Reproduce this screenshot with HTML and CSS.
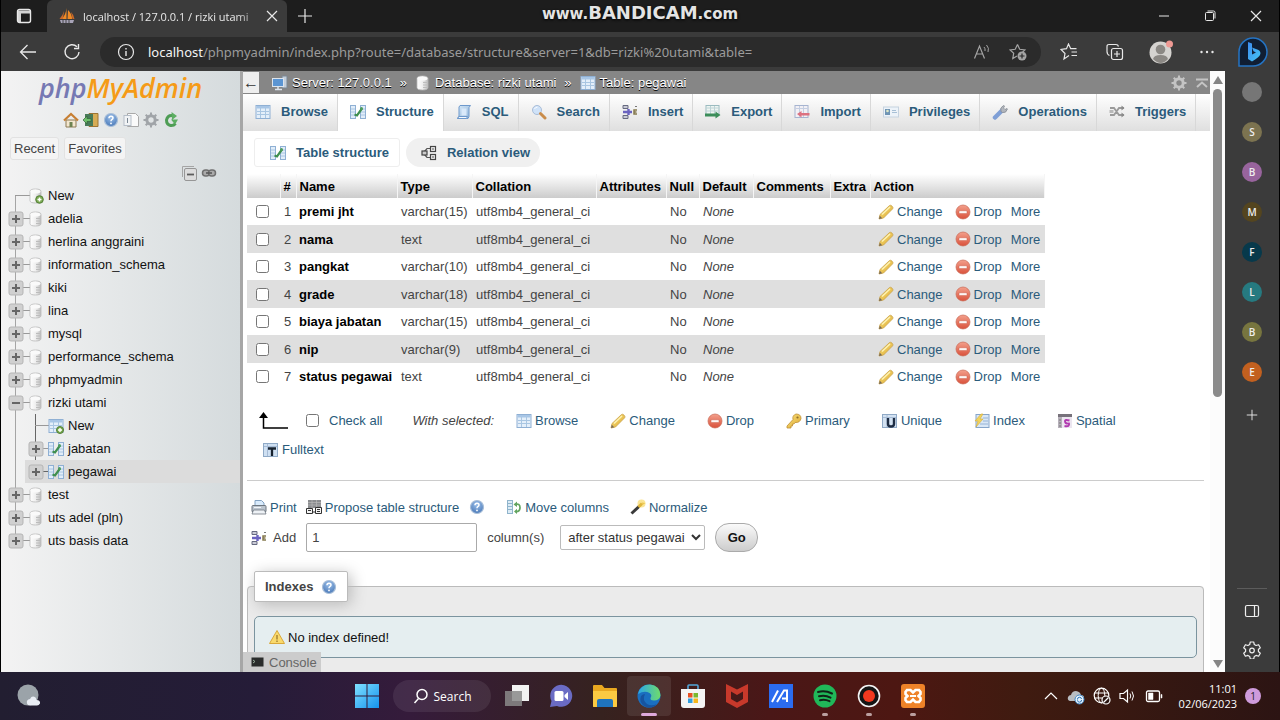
FILE: index.html
```html
<!DOCTYPE html>
<html lang="en">
<head>
    <meta charset="UTF-8">
    <meta name="viewport" content="width=device-width, initial-scale=1.0">
    <title>localhost / 127.0.0.1 / rizki utami / pegawai | phpMyAdmin</title>
    <link rel="stylesheet" href="styles.css">
</head>
<body>
    <svg class="sprite" aria-hidden="true">
        <defs>
            <linearGradient id="g-blue" x1="0" y1="0" x2="1" y2="1"><stop offset="0" stop-color="#d6e8f8"/><stop offset="1" stop-color="#8fb4d8"/></linearGradient>
            <linearGradient id="g-yellow" x1="0" y1="0" x2="1" y2="1"><stop offset="0" stop-color="#f9e27d"/><stop offset="1" stop-color="#dda832"/></linearGradient>
            <linearGradient id="g-red" x1="0" y1="0" x2="0" y2="1"><stop offset="0" stop-color="#f3a08c"/><stop offset="1" stop-color="#d9513b"/></linearGradient>
            <linearGradient id="g-db" x1="0" y1="0" x2="1" y2="0"><stop offset="0" stop-color="#ffffff"/><stop offset=".5" stop-color="#efefef"/><stop offset="1" stop-color="#bdbdbd"/></linearGradient>
            <radialGradient id="g-help" cx=".5" cy=".3" r=".7"><stop offset="0" stop-color="#9cc0ea"/><stop offset="1" stop-color="#4a79b8"/></radialGradient>
            <linearGradient id="g-win" x1="0" y1="0" x2="1" y2="1"><stop offset="0" stop-color="#7fe0ff"/><stop offset="1" stop-color="#1593ee"/></linearGradient>
            <linearGradient id="g-edge" x1="0" y1="0" x2="1" y2="0"><stop offset="0" stop-color="#2aa6e8"/><stop offset="1" stop-color="#6fdc6a"/></linearGradient>
            <linearGradient id="g-bing" x1="0" y1="0" x2="1" y2="1"><stop offset="0" stop-color="#3d8bf0"/><stop offset="1" stop-color="#45c6f2"/></linearGradient>
        </defs>

        <symbol id="i-browse" viewBox="0 0 16 16"><rect x="1" y="1.500" width="14" height="13" fill="#e4effa" stroke="#8fb0d4"/><path d="M1.500 2h13v2.500h-13z" fill="#a8c6e6"/><path d="M5.500 4v10M10.500 4v10M2 7.500h12M2 10.500h12" stroke="#a9c6e2"/></symbol>
        <symbol id="i-structure" viewBox="0 0 16 16"><rect x=".5" y="1.500" width="5" height="13" fill="#e1edf9" stroke="#8fb0d4"/><rect x="10.500" y="1.500" width="5" height="13" fill="#e1edf9" stroke="#8fb0d4"/><path d="M1 5h4M1 8h4M1 11h4M11 5h4M11 8h4M11 11h4" stroke="#a9c6e2"/><path d="M4.500 10.500l2.500 1 5-7" fill="none" stroke="#3f8f50" stroke-width="2.200"/><circle cx="11.500" cy="4.500" r="1.500" fill="#4e9c5c"/></symbol>
        <symbol id="i-sql" viewBox="0 0 16 16"><path d="M4 1.500h10.500l-1.500 2v9l-1 2H1.500l1.500-2.500v-9z" fill="url(#g-blue)" stroke="#6e99cc"/><path d="M5.500 4.500h5v7h-5z" fill="#d9e9fa"/><path d="M1.500 14.500h9l1-2H3z" fill="#f3f8fe" stroke="#6e99cc"/></symbol>
        <symbol id="i-search" viewBox="0 0 16 16"><circle cx="6" cy="6" r="4.500" fill="#cfe2f8" stroke="#a9bdd8"/><path d="M9.500 9.500l4.500 4.500" stroke="#c98c4a" stroke-width="3" stroke-linecap="round"/><path d="M3.500 5q1-2 3-2" fill="none" stroke="#fff"/></symbol>
        <symbol id="i-insert" viewBox="0 0 16 16"><path d="M1 1.500h5v3H1zM1 11.500h5v3H1z" fill="#c9cad6" stroke="#666a80"/><path d="M1 8h9M6.500 5v6" stroke="#6a63c0" stroke-width="2.400"/><path d="M15 6h-3v4h3M12 8h2.500" fill="none" stroke="#85794e" stroke-width="1.500"/><path d="M13 2.500h2" stroke="#777"/></symbol>
        <symbol id="i-export" viewBox="0 0 16 16"><rect x="1" y="1.500" width="13" height="9" fill="#eef5f2" stroke="#9bbbc0"/><path d="M1.500 4h12M1.500 7h12M5.500 2v8M9.500 2v8" stroke="#bdd3d6"/><path d="M0 9.500h10.500V7.500l5 3.500-5 3.500v-2H0z" fill="#3b8d5a"/></symbol>
        <symbol id="i-import" viewBox="0 0 16 16"><rect x="1" y="1.500" width="13" height="12" fill="#f2f0f5" stroke="#a6b4d0"/><path d="M1.500 4.500h12M5.500 2v11M9.500 2v11" stroke="#c5cfe2"/><path d="M15.500 9h-8V7L3 10l4.500 3.500v-2h8z" fill="#dc7180"/></symbol>
        <symbol id="i-priv" viewBox="0 0 16 16"><rect x=".5" y="3" width="15" height="10" fill="#edf3f9" stroke="#c6d3e0"/><rect x="2" y="5" width="5" height="6" fill="#6f94b4"/><circle cx="4.500" cy="7" r="1.300" fill="#dfe9c8"/><path d="M9 6.500h4M9 8.500h5" stroke="#a8c0d6"/></symbol>
        <symbol id="i-ops" viewBox="0 0 16 16"><path d="M3 13.500L9.500 7" stroke="#7f9fd6" stroke-width="4.500" stroke-linecap="round"/><path d="M9 7.500q-1.500-4 2.500-6l1 .5-1 2 1.500 1.500 2-1 .5.500q-1.500 4.500-5 3.500z" fill="#b2b6bd" stroke="#858b94" stroke-width=".8"/></symbol>
        <symbol id="i-triggers" viewBox="0 0 16 16"><path d="M1 4h4l5 7h5M1 11h4l5-7h5" fill="none" stroke="#9a9a9a" stroke-width="1.800"/><path d="M12.500 1.500L15.500 4l-3 2.500zM12.500 8.500l3 2.500-3 2.500z" fill="#8a8a8a"/><rect x=".5" y="6" width="4" height="3" fill="#b8b8b8"/></symbol>
        <symbol id="i-relation" viewBox="0 0 16 16"><path d="M9.500 3.500H6L3.500 6.500M3.500 9.500L6 12.500h3.500" fill="none" stroke="#555" stroke-width="1.200"/><rect x="1" y="6" width="5" height="4" fill="#ccc" stroke="#444" stroke-width="1.200"/><rect x="9.500" y="1.500" width="5" height="5" fill="#eee" stroke="#444" stroke-width="1.200"/><rect x="9.500" y="9.500" width="5" height="5" fill="#eee" stroke="#444" stroke-width="1.200"/><path d="M11 4h2M11 12h2" stroke="#555"/></symbol>
        <symbol id="i-pencil" viewBox="0 0 16 16"><path d="M1 15l1-4.500L11.500 1.500q1-.8 2.500.6t.7 2.700L5.500 14z" fill="url(#g-yellow)" stroke="#c9a24a" stroke-width=".8"/><path d="M1 15l.8-3.200 2.400 2.400z" fill="#75685a"/><path d="M4 10.500l8-7.500" stroke="#fdf3b5" stroke-width="1.400"/></symbol>
        <symbol id="i-drop" viewBox="0 0 16 16"><circle cx="8" cy="8" r="7" fill="url(#g-red)" stroke="#c96a56" stroke-width=".7"/><rect x="4" y="6.800" width="8" height="2.600" rx=".4" fill="#fff" stroke="#c95843" stroke-width=".5"/></symbol>
        <symbol id="i-key" viewBox="0 0 16 16"><path d="M1 13l6-6.500q-1-4 3-5.500 5 0 5 4.500-1 4.500-6 4l-1 1.500H6.500v2H5v2H1z" fill="url(#g-yellow)" stroke="#bf8f35" stroke-width=".8"/><circle cx="11.500" cy="4.500" r="1.100" fill="#8e6e2c"/></symbol>
        <symbol id="i-unique" viewBox="0 0 16 16"><rect x=".5" y="1.500" width="14" height="13" fill="#d3e2f2" stroke="#8fa9c6"/><path d="M1 4.500h13M5 2v12" stroke="#a7bcd6"/><path d="M6 5v6q0 2.500 3 2.500t3-2.500V5" fill="none" stroke="#1d2c43" stroke-width="2.400"/></symbol>
        <symbol id="i-index" viewBox="0 0 16 16"><rect x="2" y="1.500" width="13" height="13" fill="#d9e7f6" stroke="#86a5ca"/><path d="M9 5h5M9 8h5M6 11h8" stroke="#96b3d5"/><path d="M7 1L1 8h3l-2 6 7-8H6l3-5z" fill="#f2d45c" stroke="#d4ab3a" stroke-width=".6"/></symbol>
        <symbol id="i-spatial" viewBox="0 0 16 16"><rect x="1" y="2" width="14" height="13" fill="#ece6f0"/><path d="M1 1h14v3H1z" fill="#77727b"/><path d="M1 4h4v11H1z" fill="#b6b0ba"/><path d="M2 7h2M2 10h2M2 13h2" stroke="#777"/><path d="M12.500 7.500Q7.500 6 8 8.500t4 2q1 3.500-4.500 2.500" fill="none" stroke="#b13ab0" stroke-width="1.900"/></symbol>
        <symbol id="i-fulltext" viewBox="0 0 16 16"><rect x=".5" y="1.500" width="14" height="13" fill="#cfe0f2" stroke="#8fa9c6"/><path d="M1 4.500h13M4.500 2v12" stroke="#a7bcd6"/><path d="M5 6.500h8M9 6v8" stroke="#17222f" stroke-width="2.300"/></symbol>
        <symbol id="i-print" viewBox="0 0 16 16"><path d="M4 7V1.500h6.500L13 4v3z" fill="#d9ebfc" stroke="#83a2c2"/><path d="M1 7.500q0-1 1-1h12q1 0 1 1v5H1z" fill="#bcc5cf" stroke="#6e7780"/><path d="M2.500 11h11l1.500 4H1z" fill="#eef2f6" stroke="#6e7780" stroke-width=".8"/><path d="M3 8.500h7" stroke="#f2f5f8"/></symbol>
        <symbol id="i-propose" viewBox="0 0 16 16"><path d="M2 1h13v8H2z" fill="#8b8d90"/><path d="M2 3.500h13M2 6h13M6 1v8M10.500 1v8" stroke="#b9b9b9" stroke-width=".7"/><path d="M.5 9.500h6v5h-6zM9.500 8.500h6v6h-6z" fill="#f5f5f5" stroke="#333"/><path d="M2 11.500h3M11 10.500h3M11 12.500h3M6.500 13h3" stroke="#333"/></symbol>
        <symbol id="i-help" viewBox="0 0 16 16"><circle cx="8" cy="8" r="6.500" fill="url(#g-help)" stroke="#a9bfd9" stroke-width="1.200"/><path d="M6 6.300q0-2 2-2t2 1.700q0 1-1.200 1.700-.8.500-.8 1.500" fill="none" stroke="#fff" stroke-width="1.500"/><circle cx="8" cy="11.400" r=".9" fill="#fff"/></symbol>
        <symbol id="i-move" viewBox="0 0 16 16"><rect x="1.500" y="1.500" width="5" height="13" fill="#dcebf5" stroke="#8fb4cc"/><path d="M2 4.500h4M2 7.500h4M2 10.500h4" stroke="#8fb4cc"/><path d="M9 5.500q5-1.500 5 3T9.500 12.500" fill="none" stroke="#62a45f" stroke-width="1.700"/><path d="M11 2.500v5.500L7.500 5.500zM11 15V9.800L8 12.500z" fill="#62a45f"/></symbol>
        <symbol id="i-wand" viewBox="0 0 16 16"><circle cx="11.500" cy="4.500" r="4" fill="#fbe697"/><path d="M1.500 14.500L9 7.500" stroke="#3a3a3a" stroke-width="3"/><path d="M8.500 8l3.500-3.500" stroke="#e0b63c" stroke-width="3"/><path d="M11 0l1 3.500 3.500.5-3 2" fill="#edc750"/></symbol>
        <symbol id="i-warn" viewBox="0 0 16 16"><path d="M8 1.500L15.500 14.500H.5z" fill="#f9d96c" stroke="#d9a83a" stroke-linejoin="round"/><path d="M8 6v4.500M8 11.500v1.500" stroke="#a88534" stroke-width="1.500"/></symbol>
        <symbol id="i-console" viewBox="0 0 16 16"><rect x="1" y="3" width="13" height="10" fill="#2a2c2b" stroke="#c9c9c9"/><path d="M3 6l2 1.500L3 9" fill="none" stroke="#9bb09d"/></symbol>
        <symbol id="i-db" viewBox="0 0 16 16"><path d="M2 3.500Q2 1 7.500 1T13 3.500v9Q13 15 7.500 15T2 12.500z" fill="url(#g-db)" stroke="#b9b9b9" stroke-width=".8"/><ellipse cx="7.500" cy="3.500" rx="5" ry="2" fill="#fafafa"/><path d="M8 7.500h4M8 10h4M8 12.500h4" stroke="#bcbcbc"/></symbol>
        <symbol id="i-dbnew" viewBox="0 0 16 16"><path d="M2 3.500Q2 1 7.500 1T13 3.500v9Q13 15 7.500 15T2 12.500z" fill="url(#g-db)" stroke="#b9b9b9" stroke-width=".8"/><ellipse cx="7.500" cy="3.500" rx="5" ry="2" fill="#fafafa"/><circle cx="11.500" cy="11.500" r="3.800" fill="#78a94f" stroke="#547f38"/><path d="M11.500 9.500v4M9.500 11.500h4" stroke="#fff" stroke-width="1.500"/></symbol>
        <symbol id="i-tablenew" viewBox="0 0 16 16"><use href="#i-browse"/><circle cx="12" cy="12" r="3.500" fill="#78a94f" stroke="#547f38"/><path d="M12 10v4M10 12h4" stroke="#fff" stroke-width="1.400"/></symbol>
        <symbol id="i-plus" viewBox="0 0 16 16"><rect x="1" y="1" width="14" height="14" rx="2" fill="#d0d0d0" stroke="#b5b5b5"/><path d="M8 4v8M4 8h8" stroke="#666" stroke-width="2"/></symbol>
        <symbol id="i-minus" viewBox="0 0 16 16"><rect x="1" y="1" width="14" height="14" rx="2" fill="#d0d0d0" stroke="#b5b5b5"/><path d="M4 8h8" stroke="#666" stroke-width="2"/></symbol>
        <symbol id="i-collapse" viewBox="0 0 16 16"><path d="M1.500 12V1.500H13" fill="none" stroke="#a5a5a5"/><rect x="3.500" y="3.500" width="12" height="12" rx="1.500" fill="#dcdcdc" stroke="#969696"/><path d="M6 9.500h7" stroke="#5c5c5c" stroke-width="1.800"/></symbol>
        <symbol id="i-chain" viewBox="0 0 16 16"><rect x="1.500" y="5" width="7" height="6" rx="3" fill="#aaa" stroke="#707070" stroke-width="1.500"/><rect x="7.500" y="5" width="7" height="6" rx="3" fill="#aaa" stroke="#707070" stroke-width="1.500"/><path d="M5 8h6" stroke="#555" stroke-width="1.500"/></symbol>
        <symbol id="i-home" viewBox="0 0 16 16"><path d="M3 8h10v7H3z" fill="#f3e6cf" stroke="#8d7a55"/><path d="M1 8.500L8 2l7 6.500" fill="none" stroke="#c77f33" stroke-width="2.200"/><path d="M6.500 10h3v5h-3z" fill="#6d8251"/></symbol>
        <symbol id="i-exit" viewBox="0 0 16 16"><path d="M6 1.500h9v13H6z" fill="#d7ac55" stroke="#9c7535"/><path d="M2 2h8v12H2z" fill="#487a59"/><path d="M0 8l4-4v2.500h4v3H4V12z" fill="#6fc06c" stroke="#33633a" stroke-width=".7"/></symbol>
        <symbol id="i-docs" viewBox="0 0 16 16"><path d="M4.500 1.500h8l3 3v10h-11z" fill="#fafafa" stroke="#a9a9a9"/><rect x="1" y="3.500" width="7" height="10" fill="#f1f3f5" stroke="#b5bec8"/><path d="M4.500 6v5" stroke="#7a8894"/></symbol>
        <symbol id="i-gear" viewBox="0 0 16 16"><circle cx="8" cy="8" r="4.200" fill="none" stroke="currentColor" stroke-width="3"/><path d="M8 .5v3M8 12.500v3M.5 8h3M12.500 8h3M2.700 2.700l2.100 2.100M11.200 11.200l2.100 2.100M13.300 2.700l-2.100 2.100M4.800 11.200l-2.100 2.100" stroke="currentColor" stroke-width="2"/></symbol>
        <symbol id="i-reload" viewBox="0 0 16 16"><path d="M12.500 11.500q-2 2.500-5 2-4-1-4-5.500 1-5 6-4.500" fill="none" stroke="#4e9d55" stroke-width="3"/><path d="M8.500 0L14 4 9 8zM8 7.500h7l-3 5z" fill="#5cae62"/></symbol>
        <symbol id="i-server" viewBox="0 0 16 16"><path d="M10 1h5v12h-5z" fill="#c4cfdb" stroke="#7b8794"/><rect x=".5" y="3.500" width="11" height="8" fill="#5b95d3" stroke="#dce4ed"/><path d="M3 14.500h7M6 12v2" stroke="#dce4ed" stroke-width="1.500"/></symbol>
        <symbol id="i-pma" viewBox="0 0 16 16"><path d="M7.500 0Q7 6 3 11h4.500zM9 2q4 4 4 9H8.500z" fill="#f08a24"/><path d="M5 3Q4 7 .5 11H4zM12 4q3 3 3.500 7h-2z" fill="#c9692a"/><path d="M1 12h14l-1 3H2z" fill="#a8a4b8"/><path d="M4 12v3M7 12v3M10 12v3" stroke="#444"/></symbol>

        <symbol id="b-tabs" viewBox="0 0 16 16"><rect x="1.500" y="1.500" width="13" height="13" rx="2" fill="none" stroke="currentColor" stroke-width="1.400"/><path d="M1.500 2.500h13v3h-13zM2 5h3v9H2z" fill="currentColor" opacity=".9"/></symbol>
        <symbol id="b-close" viewBox="0 0 16 16"><path d="M3 3l10 10M13 3L3 13" stroke="currentColor" stroke-width="1.200"/></symbol>
        <symbol id="b-plus" viewBox="0 0 16 16"><path d="M8 1v14M1 8h14" stroke="currentColor" stroke-width="1.200"/></symbol>
        <symbol id="b-min" viewBox="0 0 16 16"><path d="M3 8h10" stroke="currentColor"/></symbol>
        <symbol id="b-max" viewBox="0 0 16 16"><rect x="3.500" y="4.500" width="8" height="8" rx="1" fill="none" stroke="currentColor"/><path d="M5.500 3h6q1.500 0 1.500 1.500v6" fill="none" stroke="currentColor"/></symbol>
        <symbol id="b-back" viewBox="0 0 18 18"><path d="M17 9H1.500M8.500 2L1.500 9l7 7" fill="none" stroke="currentColor" stroke-width="1.300"/></symbol>
        <symbol id="b-refresh" viewBox="0 0 18 18"><path d="M16 9a7 7 0 1 1-2-5.200M15.500 1v4.500H11" fill="none" stroke="currentColor" stroke-width="1.400"/></symbol>
        <symbol id="b-info" viewBox="0 0 18 18"><circle cx="9" cy="9" r="7.500" fill="none" stroke="currentColor" stroke-width="1.200"/><path d="M9 8v5M9 5v1.500" stroke="currentColor" stroke-width="1.400"/></symbol>
        <symbol id="b-read" viewBox="0 0 18 18"><path d="M1.500 15.500L6.500 3l5 12.500M3.500 11h6" fill="none" stroke="currentColor" stroke-width="1.200"/><path d="M11 4q1.500 1.500 1 4M13.500 2q3 3 1.500 7" fill="none" stroke="currentColor"/></symbol>
        <symbol id="b-staradd" viewBox="0 0 18 18"><path d="M8.500 1.500l2.200 4.800 5.200.6-3 3M8 13l-4.200 2.500.9-5.300L1 6.900l5.200-.6 2.300-4.800" fill="none" stroke="currentColor" stroke-width="1.200"/><circle cx="13" cy="13" r="4.500" fill="currentColor"/><path d="M13 10.500v5M10.500 13h5" stroke="#2b2b2b" stroke-width="1.200"/></symbol>
        <symbol id="b-fav" viewBox="0 0 18 18"><path d="M9 12.500L4 16l1-5.500L1 6.500l5.500-.8L8.500 1l2.200 4.700h5.800M11.500 9h5.500M11.500 12.500h5.500" fill="none" stroke="currentColor" stroke-width="1.200"/></symbol>
        <symbol id="b-collect" viewBox="0 0 18 18"><rect x="5.500" y="5.500" width="11" height="11" rx="2" fill="none" stroke="currentColor" stroke-width="1.200"/><path d="M11 8v6M8 11h6M3.500 12.500q-2.500-1-2.500-4V3.500Q1 1.500 3 1.500h7q2 0 2.500 2" fill="none" stroke="currentColor" stroke-width="1.200"/></symbol>
        <symbol id="b-dots" viewBox="0 0 18 18"><circle cx="3.500" cy="9" r="1.200" fill="currentColor"/><circle cx="9" cy="9" r="1.200" fill="currentColor"/><circle cx="14.500" cy="9" r="1.200" fill="currentColor"/></symbol>
        <symbol id="b-avatar" viewBox="0 0 24 24"><circle cx="11.500" cy="12.500" r="11" fill="#d5d3d0"/><circle cx="11.500" cy="9.500" r="4.800" fill="#8b8884"/><path d="M4 19q1-4 7.500-4t7.500 4q-7 8-15 0z" fill="#8b8884"/><circle cx="20.500" cy="4" r="3.500" fill="#ef9a94"/></symbol>
        <symbol id="b-bing" viewBox="0 0 32 32"><path d="M2 30V16A14 14 0 1 1 16 30z" fill="#101e33" stroke="#2574c4" stroke-width="1.500"/><path d="M11 6l4 1.500v11l4-2-2.500-1.200L15 11.500l6 2.200q3.500 2 2 5.300-1 2-8 6.500l-4-2.500z" fill="url(#g-bing)"/></symbol>
        <symbol id="b-panel" viewBox="0 0 16 16"><rect x="1.500" y="2.500" width="13" height="11" rx="1.500" fill="none" stroke="currentColor" stroke-width="1.200"/><path d="M10.500 2.500v11" stroke="currentColor" stroke-width="1.200"/></symbol>
        <symbol id="b-cog" viewBox="0 0 18 18"><path d="M7.300 1h3.400l.6 2.500 1.800 1 2.500-.8 1.700 3-1.900 1.800v2l1.900 1.700-1.700 3-2.500-.8-1.800 1-.6 2.600H7.300l-.6-2.600-1.800-1-2.500.8-1.700-3 1.900-1.700v-2L.7 6.700l1.700-3 2.500.8 1.800-1z" fill="none" stroke="currentColor" stroke-width="1.200" stroke-linejoin="round"/><circle cx="9" cy="9.500" r="2.300" fill="none" stroke="currentColor" stroke-width="1.200"/></symbol>

        <symbol id="t-weather" viewBox="0 0 26 26"><circle cx="12" cy="12" r="10.500" fill="#9ba3a9"/><path d="M11 20.500q-1-4 3-4.500 2-4 5.500-1.500 1 1 1 2.500 4 0 3.500 3.500-1 2-3 2h-7q-2.500 0-3-2z" fill="#e9edf4"/></symbol>
        <symbol id="t-win" viewBox="0 0 26 26"><path d="M1 1h11.500v11.500H1zM13.500 1H25v11.500H13.500zM1 13.500h11.500V25H1zM13.500 13.500H25V25H13.500z" fill="url(#g-win)"/></symbol>
        <symbol id="t-search" viewBox="0 0 16 16"><circle cx="9" cy="6.500" r="5" fill="none" stroke="currentColor" stroke-width="1.500"/><path d="M5.500 10.500L1.500 15" stroke="currentColor" stroke-width="1.500"/></symbol>
        <symbol id="t-view" viewBox="0 0 26 26"><path d="M8 2h17v16H8z" fill="#f2f2f2"/><path d="M1 8h17v15H1z" fill="#8a8a8a" opacity=".85"/></symbol>
        <symbol id="t-chat" viewBox="0 0 26 26"><path d="M2 24l1.500-6A11 11 0 1 1 9 23z" fill="#6a6bc4"/><rect x="6.500" y="8" width="9" height="10" rx="1.500" fill="#fff"/><path d="M16.500 12l3.500-3v8l-3.500-3z" fill="#fff"/></symbol>
        <symbol id="t-folder" viewBox="0 0 26 26"><path d="M1 3q0-1 1-1h8l2.500 3H24q1 0 1 1v17q0 1-1 1H2q-1 0-1-1z" fill="#e9a820"/><path d="M1 8h24v15q0 1-1 1H2q-1 0-1-1z" fill="#fbca42"/><path d="M5 24v-6q0-2 2-2h12q2 0 2 2v6z" fill="#1f74bd"/></symbol>
        <symbol id="t-edge" viewBox="0 0 26 26"><circle cx="13" cy="13" r="11.500" fill="#1a6fc0"/><path d="M2 11Q4 1.500 14 1.500q10 1 10.500 11-1 5-6.500 5-4 0-3.500-2.500 2-3-1-5-5-3-11.500 1z" fill="url(#g-edge)"/><path d="M9 11q-3 6 2 10 4 2.500 10 0-4 5-11 3-8-4-5-11 2-2 4-2z" fill="#1754a0"/></symbol>
        <symbol id="t-store" viewBox="0 0 26 26"><path d="M8 7V3q0-1 1-1h8q1 0 1 1v4" fill="none" stroke="#53a6d9" stroke-width="1.600"/><path d="M1 6h24v16q0 3-3 3H4q-3 0-3-3z" fill="#f4f4f4"/><path d="M8 10h4.500v4.500H8z" fill="#e75124"/><path d="M13.500 10H18v4.500h-4.500z" fill="#7ab82f"/><path d="M8 15.500h4.500V20H8z" fill="#2e9ee0"/><path d="M13.500 15.500H18V20h-4.500z" fill="#f5b61c"/></symbol>
        <symbol id="t-mcafee" viewBox="0 0 26 26"><path d="M2 1l11 5.500L24 1v18l-11 6-11-6zM7 8.500v7.500l6 3.500 6-3.500V8.500L13 12z" fill="#c8392b" fill-rule="evenodd"/></symbol>
        <symbol id="t-asus" viewBox="0 0 26 26"><path d="M1 1h24v24H1z" fill="#2b6cf0"/><path d="M4 19L10 7.500M9 19l7-11.500h3V19M14 15.500h5" fill="none" stroke="#fff" stroke-width="2"/></symbol>
        <symbol id="t-spotify" viewBox="0 0 26 26"><circle cx="13" cy="13" r="11.500" fill="#20b859"/><path d="M6 9q7-2 14 1.500M7 13.300q6-1.700 11.500 1.300M8 17.200q5-1.200 9.500 1" fill="none" stroke="#102417" stroke-width="2" stroke-linecap="round"/></symbol>
        <symbol id="t-rec" viewBox="0 0 26 26"><circle cx="13" cy="13" r="10.500" fill="#151515" stroke="#f3f3f3" stroke-width="1.600"/><circle cx="13" cy="13" r="6" fill="#f2391f"/></symbol>
        <symbol id="t-xampp" viewBox="0 0 26 26"><rect x="1" y="1" width="24" height="24" rx="3" fill="#ee8228"/><path d="M7 7h3.500L13 9.500 15.500 7H19l1.500 2v2L18.500 13l2 2v2L19 19h-3.500L13 16.500 10.500 19H7l-1.500-2v-2l2-2-2-2V9z" fill="none" stroke="#fff" stroke-width="2.600"/><path d="M10 13h6" stroke="#fff" stroke-width="2"/></symbol>
        <symbol id="t-up" viewBox="0 0 16 16"><path d="M2 11l6-6 6 6" fill="none" stroke="currentColor" stroke-width="1.200"/></symbol>
        <symbol id="t-cloud" viewBox="0 0 18 18"><path d="M3 14q-3-1-2-4 1-2 3-2 1-4 5-4 4 .5 5 4 3 0 3 3t-3 3z" fill="#b9bcc0"/><circle cx="12.500" cy="12.500" r="4.500" fill="#e8f1fa" stroke="#3f86c4"/><path d="M10.500 12.500a2 2 0 0 1 4-.5M14.500 13a2 2 0 0 1-4 .3" fill="none" stroke="#2571b5"/></symbol>
        <symbol id="t-globe" viewBox="0 0 18 18"><circle cx="8.500" cy="8.500" r="7.300" fill="none" stroke="currentColor" stroke-width="1.200"/><ellipse cx="8.500" cy="8.500" rx="3.300" ry="7.300" fill="none" stroke="currentColor"/><path d="M1.500 6h14M1.500 11h14" stroke="currentColor"/><circle cx="13" cy="13" r="4" fill="#2b1612" stroke="currentColor" stroke-width="1.200"/><path d="M10.500 15.500l5-5" stroke="currentColor" stroke-width="1.200"/></symbol>
        <symbol id="t-sound" viewBox="0 0 18 18"><path d="M1 6.500h3.500L8.500 3v12l-4-3.500H1z" fill="none" stroke="currentColor" stroke-width="1.200"/><path d="M11 6.500q1.500 2.500 0 5M13 4.500q3 4.500 0 9" fill="none" stroke="currentColor"/></symbol>
        <symbol id="t-battery" viewBox="0 0 18 18"><rect x="1.500" y="4" width="13" height="10.500" rx="1.500" fill="none" stroke="currentColor" stroke-width="1.300"/><path d="M3.500 6H8v6.500H3.500zM16 7.500h1v3.500h-1z" fill="currentColor" stroke="currentColor" stroke-width=".5"/></symbol>
    </svg>

    <header class="titlebar">
        <button class="icon-btn tab-actions" aria-label="Tab actions"><svg class="icon"><use href="#b-tabs"/></svg></button>
        <div class="browser-tab">
            <svg class="icon"><use href="#i-pma"/></svg>
            <span class="browser-tab-title">localhost / 127.0.0.1 / rizki utami</span>
            <button class="icon-btn" aria-label="Close tab"><svg class="icon"><use href="#b-close"/></svg></button>
        </div>
        <button class="icon-btn new-tab" aria-label="New tab"><svg class="icon"><use href="#b-plus"/></svg></button>
        <div class="watermark">www.<b>BANDICAM</b>.com</div>
        <div class="window-controls">
            <button class="icon-btn" aria-label="Minimize"><svg class="icon"><use href="#b-min"/></svg></button>
            <button class="icon-btn" aria-label="Restore"><svg class="icon"><use href="#b-max"/></svg></button>
            <button class="icon-btn" aria-label="Close"><svg class="icon"><use href="#b-close"/></svg></button>
        </div>
    </header>

    <div class="toolbar">
        <button class="icon-btn" aria-label="Back"><svg class="icon-lg"><use href="#b-back"/></svg></button>
        <button class="icon-btn" aria-label="Refresh"><svg class="icon-lg"><use href="#b-refresh"/></svg></button>
        <div class="address">
            <svg class="icon-lg"><use href="#b-info"/></svg>
            <span class="url"><span class="url-host">localhost</span>/phpmyadmin/index.php?route=/database/structure&amp;server=1&amp;db=rizki%20utami&amp;table=</span>
            <svg class="icon-lg dim"><use href="#b-read"/></svg>
            <svg class="icon-lg dim"><use href="#b-staradd"/></svg>
        </div>
        <div class="toolbar-actions">
            <button class="icon-btn" aria-label="Favorites"><svg class="icon-lg"><use href="#b-fav"/></svg></button>
            <button class="icon-btn" aria-label="Collections"><svg class="icon-lg"><use href="#b-collect"/></svg></button>
            <button class="icon-btn" aria-label="Profile"><svg class="icon-avatar"><use href="#b-avatar"/></svg></button>
            <button class="icon-btn" aria-label="Settings and more"><svg class="icon-lg"><use href="#b-dots"/></svg></button>
            <button class="icon-btn" aria-label="Discover"><svg class="icon-bing"><use href="#b-bing"/></svg></button>
        </div>
    </div>

    <div class="workspace">
        <nav class="pma-nav">
            <a class="pma-logo" href="#"><span>php</span>MyAdmin</a>
            <div class="nav-icons">
                <a href="#" aria-label="Home"><svg class="icon"><use href="#i-home"/></svg></a>
                <a href="#" aria-label="Log out"><svg class="icon"><use href="#i-exit"/></svg></a>
                <a href="#" aria-label="phpMyAdmin documentation"><svg class="icon"><use href="#i-help"/></svg></a>
                <a href="#" aria-label="Documentation"><svg class="icon"><use href="#i-docs"/></svg></a>
                <a href="#" aria-label="Navigation panel settings"><svg class="icon gear"><use href="#i-gear"/></svg></a>
                <a href="#" aria-label="Reload navigation panel"><svg class="icon"><use href="#i-reload"/></svg></a>
            </div>
            <div class="nav-lists">
                <button>Recent</button>
                <button>Favorites</button>
            </div>
            <div class="nav-tools">
                <a href="#" aria-label="Collapse all"><svg class="icon"><use href="#i-collapse"/></svg></a>
                <a href="#" aria-label="Unlink from main panel"><svg class="icon"><use href="#i-chain"/></svg></a>
            </div>
            <ul class="tree">
                <li><div class="node leaf"><svg class="icon"><use href="#i-dbnew"/></svg><a href="#">New</a></div></li>
                <li><div class="node"><button aria-label="Expand"><svg class="icon"><use href="#i-plus"/></svg></button><svg class="icon"><use href="#i-db"/></svg><a href="#">adelia</a></div></li>
                <li><div class="node"><button aria-label="Expand"><svg class="icon"><use href="#i-plus"/></svg></button><svg class="icon"><use href="#i-db"/></svg><a href="#">herlina anggraini</a></div></li>
                <li><div class="node"><button aria-label="Expand"><svg class="icon"><use href="#i-plus"/></svg></button><svg class="icon"><use href="#i-db"/></svg><a href="#">information_schema</a></div></li>
                <li><div class="node"><button aria-label="Expand"><svg class="icon"><use href="#i-plus"/></svg></button><svg class="icon"><use href="#i-db"/></svg><a href="#">kiki</a></div></li>
                <li><div class="node"><button aria-label="Expand"><svg class="icon"><use href="#i-plus"/></svg></button><svg class="icon"><use href="#i-db"/></svg><a href="#">lina</a></div></li>
                <li><div class="node"><button aria-label="Expand"><svg class="icon"><use href="#i-plus"/></svg></button><svg class="icon"><use href="#i-db"/></svg><a href="#">mysql</a></div></li>
                <li><div class="node"><button aria-label="Expand"><svg class="icon"><use href="#i-plus"/></svg></button><svg class="icon"><use href="#i-db"/></svg><a href="#">performance_schema</a></div></li>
                <li><div class="node"><button aria-label="Expand"><svg class="icon"><use href="#i-plus"/></svg></button><svg class="icon"><use href="#i-db"/></svg><a href="#">phpmyadmin</a></div></li>
                <li>
                    <div class="node"><button aria-label="Collapse"><svg class="icon"><use href="#i-minus"/></svg></button><svg class="icon"><use href="#i-db"/></svg><a href="#">rizki utami</a></div>
                    <ul class="subtree">
                        <li><div class="node leaf"><svg class="icon"><use href="#i-tablenew"/></svg><a href="#">New</a></div></li>
                        <li><div class="node"><button aria-label="Expand"><svg class="icon"><use href="#i-plus"/></svg></button><svg class="icon"><use href="#i-structure"/></svg><a href="#">jabatan</a></div></li>
                        <li><div class="node selected"><button aria-label="Expand"><svg class="icon"><use href="#i-plus"/></svg></button><svg class="icon"><use href="#i-structure"/></svg><a href="#">pegawai</a></div></li>
                    </ul>
                </li>
                <li><div class="node"><button aria-label="Expand"><svg class="icon"><use href="#i-plus"/></svg></button><svg class="icon"><use href="#i-db"/></svg><a href="#">test</a></div></li>
                <li><div class="node"><button aria-label="Expand"><svg class="icon"><use href="#i-plus"/></svg></button><svg class="icon"><use href="#i-db"/></svg><a href="#">uts adel (pln)</a></div></li>
                <li><div class="node"><button aria-label="Expand"><svg class="icon"><use href="#i-plus"/></svg></button><svg class="icon"><use href="#i-db"/></svg><a href="#">uts basis data</a></div></li>
            </ul>
        </nav>

        <main class="pma-main">
            <div class="breadcrumb">
                <button class="collapse-nav" aria-label="Hide panel">←</button>
                <a href="#"><svg class="icon"><use href="#i-server"/></svg>Server: 127.0.0.1</a>
                <span>»</span>
                <a href="#"><svg class="icon"><use href="#i-db"/></svg>Database: rizki utami</a>
                <span>»</span>
                <a href="#"><svg class="icon"><use href="#i-browse"/></svg>Table: pegawai</a>
                <div class="breadcrumb-tools">
                    <svg class="icon"><use href="#i-gear"/></svg>
                    <svg class="icon" viewBox="0 0 16 16"><path d="M2 4.500h12M3 12l5-4.500 5 4.500" fill="none" stroke="currentColor" stroke-width="2"/></svg>
                </div>
            </div>

            <div class="tabs">
                <a href="#"><svg class="icon"><use href="#i-browse"/></svg>Browse</a>
                <a href="#" class="active"><svg class="icon"><use href="#i-structure"/></svg>Structure</a>
                <a href="#"><svg class="icon"><use href="#i-sql"/></svg>SQL</a>
                <a href="#"><svg class="icon"><use href="#i-search"/></svg>Search</a>
                <a href="#"><svg class="icon"><use href="#i-insert"/></svg>Insert</a>
                <a href="#"><svg class="icon"><use href="#i-export"/></svg>Export</a>
                <a href="#"><svg class="icon"><use href="#i-import"/></svg>Import</a>
                <a href="#"><svg class="icon"><use href="#i-priv"/></svg>Privileges</a>
                <a href="#"><svg class="icon"><use href="#i-ops"/></svg>Operations</a>
                <a href="#"><svg class="icon"><use href="#i-triggers"/></svg>Triggers</a>
            </div>

            <div class="content">
                <div class="subtabs">
                    <a href="#" class="active"><svg class="icon"><use href="#i-structure"/></svg>Table structure</a>
                    <a href="#"><svg class="icon"><use href="#i-relation"/></svg>Relation view</a>
                </div>

                <table class="columns">
                    <colgroup>
                        <col class="c-check"><col class="c-num"><col class="c-name"><col class="c-type"><col class="c-coll"><col class="c-attr"><col class="c-null"><col class="c-def"><col class="c-comm"><col class="c-extra"><col class="c-action">
                    </colgroup>
                    <thead>
                        <tr><th></th><th>#</th><th>Name</th><th>Type</th><th>Collation</th><th>Attributes</th><th>Null</th><th>Default</th><th>Comments</th><th>Extra</th><th>Action</th></tr>
                    </thead>
                    <tbody>
                        <tr>
                            <td><input type="checkbox" aria-label="Select premi jht"></td><td>1</td><th>premi jht</th><td>varchar(15)</td><td>utf8mb4_general_ci</td><td></td><td>No</td><td><i>None</i></td><td></td><td></td>
                            <td><div class="row-actions"><a href="#"><svg class="icon"><use href="#i-pencil"/></svg>Change</a><a href="#"><svg class="icon"><use href="#i-drop"/></svg>Drop</a><a href="#">More</a></div></td>
                        </tr>
                        <tr>
                            <td><input type="checkbox" aria-label="Select nama"></td><td>2</td><th>nama</th><td>text</td><td>utf8mb4_general_ci</td><td></td><td>No</td><td><i>None</i></td><td></td><td></td>
                            <td><div class="row-actions"><a href="#"><svg class="icon"><use href="#i-pencil"/></svg>Change</a><a href="#"><svg class="icon"><use href="#i-drop"/></svg>Drop</a><a href="#">More</a></div></td>
                        </tr>
                        <tr>
                            <td><input type="checkbox" aria-label="Select pangkat"></td><td>3</td><th>pangkat</th><td>varchar(10)</td><td>utf8mb4_general_ci</td><td></td><td>No</td><td><i>None</i></td><td></td><td></td>
                            <td><div class="row-actions"><a href="#"><svg class="icon"><use href="#i-pencil"/></svg>Change</a><a href="#"><svg class="icon"><use href="#i-drop"/></svg>Drop</a><a href="#">More</a></div></td>
                        </tr>
                        <tr>
                            <td><input type="checkbox" aria-label="Select grade"></td><td>4</td><th>grade</th><td>varchar(18)</td><td>utf8mb4_general_ci</td><td></td><td>No</td><td><i>None</i></td><td></td><td></td>
                            <td><div class="row-actions"><a href="#"><svg class="icon"><use href="#i-pencil"/></svg>Change</a><a href="#"><svg class="icon"><use href="#i-drop"/></svg>Drop</a><a href="#">More</a></div></td>
                        </tr>
                        <tr>
                            <td><input type="checkbox" aria-label="Select biaya jabatan"></td><td>5</td><th>biaya jabatan</th><td>varchar(15)</td><td>utf8mb4_general_ci</td><td></td><td>No</td><td><i>None</i></td><td></td><td></td>
                            <td><div class="row-actions"><a href="#"><svg class="icon"><use href="#i-pencil"/></svg>Change</a><a href="#"><svg class="icon"><use href="#i-drop"/></svg>Drop</a><a href="#">More</a></div></td>
                        </tr>
                        <tr>
                            <td><input type="checkbox" aria-label="Select nip"></td><td>6</td><th>nip</th><td>varchar(9)</td><td>utf8mb4_general_ci</td><td></td><td>No</td><td><i>None</i></td><td></td><td></td>
                            <td><div class="row-actions"><a href="#"><svg class="icon"><use href="#i-pencil"/></svg>Change</a><a href="#"><svg class="icon"><use href="#i-drop"/></svg>Drop</a><a href="#">More</a></div></td>
                        </tr>
                        <tr>
                            <td><input type="checkbox" aria-label="Select status pegawai"></td><td>7</td><th>status pegawai</th><td>text</td><td>utf8mb4_general_ci</td><td></td><td>No</td><td><i>None</i></td><td></td><td></td>
                            <td><div class="row-actions"><a href="#"><svg class="icon"><use href="#i-pencil"/></svg>Change</a><a href="#"><svg class="icon"><use href="#i-drop"/></svg>Drop</a><a href="#">More</a></div></td>
                        </tr>
                    </tbody>
                </table>

                <div class="bulk">
                    <svg class="bulk-arrow" viewBox="0 0 32 18"><path d="M6.500 4v12H31" fill="none" stroke="#000" stroke-width="1.500"/><path d="M6.500 0l4.500 6H2z"/></svg>
                    <label class="check-all"><input type="checkbox">Check all</label>
                    <i class="with-selected">With selected:</i>
                    <button><svg class="icon"><use href="#i-browse"/></svg>Browse</button>
                    <button><svg class="icon"><use href="#i-pencil"/></svg>Change</button>
                    <button><svg class="icon"><use href="#i-drop"/></svg>Drop</button>
                    <button><svg class="icon"><use href="#i-key"/></svg>Primary</button>
                    <button><svg class="icon"><use href="#i-unique"/></svg>Unique</button>
                    <button><svg class="icon"><use href="#i-index"/></svg>Index</button>
                    <button><svg class="icon"><use href="#i-spatial"/></svg>Spatial</button>
                    <button><svg class="icon"><use href="#i-fulltext"/></svg>Fulltext</button>
                </div>

                <hr>

                <div class="table-links">
                    <a href="#"><svg class="icon"><use href="#i-print"/></svg>Print</a>
                    <a href="#" class="propose"><svg class="icon"><use href="#i-propose"/></svg>Propose table structure</a>
                    <a href="#" class="help" aria-label="Documentation"><svg class="icon"><use href="#i-help"/></svg></a>
                    <a href="#" class="spaced"><svg class="icon"><use href="#i-move"/></svg>Move columns</a>
                    <a href="#" class="spaced"><svg class="icon"><use href="#i-wand"/></svg>Normalize</a>
                </div>

                <form class="add-columns">
                    <svg class="icon"><use href="#i-insert"/></svg>
                    <label for="num_fields">Add</label>
                    <input type="text" id="num_fields" value="1">
                    <label for="after_field">column(s)</label>
                    <select id="after_field">
                        <option>after status pegawai</option>
                    </select>
                    <button type="button">Go</button>
                </form>

                <fieldset class="indexes">
                    <legend>Indexes <svg class="icon"><use href="#i-help"/></svg></legend>
                    <div class="notice"><svg class="icon"><use href="#i-warn"/></svg>No index defined!</div>
                </fieldset>
            </div>

            <button class="console"><svg class="icon"><use href="#i-console"/></svg>Console</button>
        </main>

        <div class="scrollbar">
            <svg viewBox="0 0 10 8"><path d="M5 0l5 8H0z"/></svg>
            <div class="thumb"></div>
            <svg viewBox="0 0 10 8"><path d="M5 8l5-8H0z"/></svg>
        </div>

        <aside class="edge-bar">
            <span class="dot blank"></span>
            <span class="dot olive">S</span>
            <span class="dot purple">B</span>
            <span class="dot brown">M</span>
            <span class="dot navy">F</span>
            <span class="dot teal">L</span>
            <span class="dot moss">B</span>
            <span class="dot orange">E</span>
            <button class="icon-btn edge-add" aria-label="Add site"><svg class="icon"><use href="#b-plus"/></svg></button>
            <div class="edge-bottom">
                <button class="icon-btn" aria-label="Hide sidebar"><svg class="icon"><use href="#b-panel"/></svg></button>
                <button class="icon-btn" aria-label="Settings"><svg class="icon-lg"><use href="#b-cog"/></svg></button>
            </div>
        </aside>
    </div>

    <footer class="taskbar">
        <button class="icon-btn weather" aria-label="Weather"><svg class="icon-task"><use href="#t-weather"/></svg></button>
        <div class="task-apps">
            <button aria-label="Start"><svg class="icon-task"><use href="#t-win"/></svg></button>
            <button class="task-search"><svg class="icon"><use href="#t-search"/></svg>Search</button>
            <button aria-label="Task view"><svg class="icon-task"><use href="#t-view"/></svg></button>
            <button aria-label="Chat"><svg class="icon-task"><use href="#t-chat"/></svg></button>
            <button aria-label="File Explorer"><svg class="icon-task"><use href="#t-folder"/></svg></button>
            <button class="current" aria-label="Microsoft Edge"><svg class="icon-task"><use href="#t-edge"/></svg></button>
            <button aria-label="Microsoft Store"><svg class="icon-task"><use href="#t-store"/></svg></button>
            <button aria-label="McAfee"><svg class="icon-task"><use href="#t-mcafee"/></svg></button>
            <button aria-label="MyASUS"><svg class="icon-task"><use href="#t-asus"/></svg></button>
            <button class="running" aria-label="Spotify"><svg class="icon-task"><use href="#t-spotify"/></svg></button>
            <button class="running" aria-label="Bandicam"><svg class="icon-task"><use href="#t-rec"/></svg></button>
            <button class="running" aria-label="XAMPP"><svg class="icon-task"><use href="#t-xampp"/></svg></button>
        </div>
        <div class="tray">
            <svg class="icon"><use href="#t-up"/></svg>
            <svg class="icon-lg"><use href="#t-cloud"/></svg>
            <svg class="icon-lg"><use href="#t-globe"/></svg>
            <svg class="icon-lg"><use href="#t-sound"/></svg>
            <svg class="icon-lg"><use href="#t-battery"/></svg>
            <div class="clock"><div>11:01</div><div>02/06/2023</div></div>
            <span class="badge">1</span>
        </div>
    </footer>
</body>
</html>
```

FILE: styles.css
```css
* {
    margin: 0;
    padding: 0;
    box-sizing: border-box;
}

body {
    font-family: 'Liberation Sans', Arial, sans-serif;
    font-size: 13px;
    color: #444;
    background: #000;
    height: 100vh;
    display: flex;
    flex-direction: column;
    overflow: hidden;
}

a {
    color: #2b5b7b;
    text-decoration: none;
}

button {
    font: inherit;
    color: inherit;
    background: none;
    border: none;
    cursor: pointer;
}

ul {
    list-style: none;
}

.sprite {
    position: absolute;
    width: 0;
    height: 0;
}

.icon,
.icon-lg,
.icon-task {
    width: 16px;
    height: 16px;
    flex: none;
}

.icon-lg {
    width: 18px;
    height: 18px;
}

.icon-task {
    width: 26px;
    height: 26px;
}

.icon-avatar {
    width: 24px;
    height: 24px;
}

.icon-bing {
    width: 32px;
    height: 32px;
}

.icon-btn {
    display: flex;
    align-items: center;
    justify-content: center;
}

/* browser chrome */
.titlebar {
    position: relative;
    display: flex;
    height: 32px;
    margin: 0 1px;
    background: #1d1d1d;
    color: #e8e8e8;
    font-family: 'Open Sans', 'Noto Sans', sans-serif;
    flex: none;
}

.tab-actions {
    width: 46px;
}

.browser-tab {
    display: flex;
    align-items: center;
    width: 240px;
    padding: 0 7px 0 12px;
    gap: 8px;
    background: #3b3b3b;
    border-radius: 6px 6px 0 0;
    font-size: 11px;
}

.browser-tab-title {
    flex: 1;
    white-space: nowrap;
    mask-image: linear-gradient(90deg, #000 88%, #0006);
}

.new-tab {
    width: 36px;
}

.watermark {
    position: absolute;
    left: 50%;
    top: 4px;
    transform: translateX(-50%);
    font: bold 15px/18px 'DejaVu Sans', sans-serif;
    color: #e4e4e4;
    text-shadow: 0 1px 3px #000;
}

.watermark b {
    font-size: 18px;
}

.window-controls {
    display: flex;
    margin-left: auto;
}

.window-controls .icon-btn {
    width: 46px;
}

.toolbar {
    display: flex;
    align-items: center;
    height: 39px;
    margin: 0 1px;
    padding: 0 4px 0 5px;
    background: #3b3b3b;
    color: #e8e8e8;
    flex: none;
}

.toolbar .icon-btn {
    width: 44px;
}

.address {
    display: flex;
    align-items: center;
    flex: 1;
    height: 30px;
    margin: 0 6px;
    padding: 0 14px 0 17px;
    background: #2b2b2b;
    border-radius: 15px;
    font: 13px 'Noto Sans', sans-serif;
}

.url {
    flex: 1;
    margin-left: 13px;
    color: #9b9b9b;
    white-space: nowrap;
    overflow: hidden;
}

.url-host {
    color: #f4f4f4;
}

.dim {
    margin-left: 18px;
    color: #a5a5a5;
}

.toolbar-actions {
    display: flex;
    gap: 2px;
}

.workspace {
    display: flex;
    flex: 1;
    min-height: 0;
    margin: 0 1px;
    background: #fff;
}

/* navigation panel */
.pma-nav {
    width: 242px;
    flex: none;
    background: linear-gradient(90deg, #f3f3f3, #d5dbdd);
    border-right: 3px solid #a6a6a6;
}

.pma-logo {
    display: block;
    text-align: center;
    font: italic 600 27px/34px 'Open Sans', 'Noto Sans', sans-serif;
    color: #f59b17;
}

.pma-logo span {
    color: #7679b3;
}

.nav-icons {
    display: flex;
    justify-content: center;
    gap: 4px;
    padding-top: 7px;
}

.nav-icons a {
    display: flex;
}

.gear {
    color: #a0a4a8;
}

.nav-lists {
    display: flex;
    gap: 5px;
    padding: 9px 9px 0;
}

.nav-lists button {
    height: 23px;
    padding: 0 3px;
    background: #f4f4f4;
    border: 1px solid #e2e2e2;
    border-radius: 3px;
}

.nav-tools {
    display: flex;
    justify-content: flex-end;
    gap: 4px;
    padding: 5px 23px 3px 0;
}

.nav-tools a {
    display: flex;
}

.tree {
    background: linear-gradient(#a5a5a5, #a5a5a5) no-repeat 14px 12px / 1px calc(100% - 23px);
}

.subtree {
    margin-left: 20px;
    background: linear-gradient(#666, #666) no-repeat 14px 0 / 1px calc(100% - 11px);
}

.node {
    display: flex;
    align-items: center;
    height: 23px;
    padding-left: 7px;
    background: linear-gradient(#999, #999) no-repeat 14px 11px / 15px 1px;
}

.node button {
    display: flex;
    margin-right: 4px;
}

.node.leaf {
    padding-left: 27px;
}

.node a {
    margin-left: 4px;
    color: #111;
}

.node.selected {
    margin-left: 4px;
    padding-left: 3px;
    background: linear-gradient(#666, #666) no-repeat 10px 11px / 15px 1px, linear-gradient(#dcdcdc, #dcdcdc);
}

/* main panel */
.pma-main {
    position: relative;
    flex: 1;
    min-width: 0;
    overflow: hidden;
}

.breadcrumb {
    display: flex;
    align-items: center;
    height: 23px;
    gap: 8px;
    background: #868686;
    color: #fff;
    text-shadow: 0 1px 0 #000;
}

.breadcrumb a {
    display: flex;
    gap: 4px;
    color: #fff;
}

.collapse-nav {
    width: 16px;
    height: 21px;
    margin-right: 5px;
    background: #eee;
    color: #333;
    font-size: 16px;
    text-shadow: none;
}

.breadcrumb-tools {
    display: flex;
    gap: 7px;
    margin-left: auto;
    color: #c4c4c4;
}

.tabs {
    display: flex;
    height: 37px;
    background: linear-gradient(#fff, #dfdfdf);
}

.tabs a {
    display: flex;
    align-items: center;
    gap: 10px;
    padding: 0 9px 2px 12px;
    border-right: 1px solid #d8d8d8;
    font-weight: bold;
}

.tabs .active {
    background: #fff;
}

.content {
    padding: 7px 6px 0 4px;
}

.subtabs {
    display: flex;
    gap: 6px;
    padding-left: 7px;
}

.subtabs a {
    display: flex;
    align-items: center;
    gap: 10px;
    height: 29px;
    padding: 0 10px 0 15px;
    background: #f0f0f0;
    border-radius: 15px;
    font-weight: bold;
}

.subtabs .active {
    background: #fff;
    border: 1px solid #eee;
    border-radius: 3px;
}

.columns {
    margin-top: 7px;
    border-collapse: collapse;
    table-layout: fixed;
    width: 798px;
    white-space: nowrap;
}

.c-check { width: 33px; }
.c-num { width: 16px; }
.c-name { width: 101px; }
.c-type { width: 75px; }
.c-coll { width: 124px; }
.c-attr { width: 70px; }
.c-null { width: 33px; }
.c-def { width: 54px; }
.c-comm { width: 77px; }
.c-extra { width: 40px; }

.columns th,
.columns td {
    padding: 0 0 0 4px;
    text-align: left;
}

.columns th {
    padding-left: 3px;
    color: #000;
}

.columns thead tr {
    height: 24px;
    background: linear-gradient(#fff, #ccc);
}

.columns thead th {
    border-right: 1px solid #f5f5f5;
}

.columns tbody tr {
    height: 27px;
}

.columns tbody tr:nth-child(even) {
    height: 28px;
    background: #dfdfdf;
}

.columns td:first-child {
    padding-left: 9px;
}

.columns input {
    display: block;
}

.row-actions {
    display: flex;
}

.row-actions a,
.bulk button,
.table-links a {
    display: flex;
    align-items: center;
    gap: 3px;
}

.row-actions a {
    margin-right: 9px;
}

.row-actions a:first-child {
    margin: 0 12px 0 4px;
}

.bulk {
    display: flex;
    flex-wrap: wrap;
    align-items: center;
    padding-top: 16px;
}

.bulk-arrow {
    width: 32px;
    height: 18px;
    margin: 0 17px 0 10px;
}

.check-all {
    display: flex;
    align-items: center;
    gap: 10px;
    color: #2b5b7b;
}

.with-selected {
    margin: 0 6px 0 30px;
}

.bulk button {
    height: 29px;
    padding: 0 16px;
    color: #2b5b7b;
}

hr {
    margin-top: 16px;
    border: none;
    border-top: 1px solid #ccc;
}

.table-links {
    display: flex;
    padding: 18px 0 0 4px;
}

.propose {
    margin-left: 9px;
}

.help {
    margin-left: 10px;
}

.spaced {
    margin-left: 21px;
}

.add-columns {
    display: flex;
    align-items: center;
    gap: 6px;
    padding: 8px 0 0 4px;
}

.add-columns input {
    width: 171px;
    height: 29px;
    margin: 0 4px;
    padding: 0 5px;
    border: 1px solid #aaa;
    border-radius: 2px;
    font: inherit;
    color: #444;
}

.add-columns select {
    height: 25px;
    margin-left: 10px;
    padding: 0 3px;
    background: #fff;
    border: 1px solid #bbb;
    border-radius: 2px;
    font: inherit;
    color: #333;
}

.add-columns button {
    width: 43px;
    height: 29px;
    margin-left: 4px;
    background: linear-gradient(#fafafa, #ccc);
    border: 1px solid #aaa;
    border-radius: 14px;
    font-weight: bold;
    color: #111;
}

.indexes {
    margin-top: 19px;
    padding: 14px 6px 24px;
    background: #ebebeb;
    border: 1px solid #bbb;
    border-radius: 4px 4px 0 0;
}

.indexes legend {
    display: flex;
    align-items: center;
    gap: 8px;
    height: 31px;
    padding: 0 10px;
    background: #fff;
    border: 1px solid #bbb;
    border-radius: 2px;
    box-shadow: 3px 3px 15px #bbb;
    font-weight: bold;
}

.notice {
    display: flex;
    align-items: center;
    gap: 3px;
    height: 42px;
    padding-left: 14px;
    background: #e5eef0;
    border: 1px solid #7b949f;
    border-radius: 5px;
    color: #111;
}

.console {
    position: absolute;
    left: 0;
    bottom: 0;
    display: flex;
    align-items: center;
    gap: 3px;
    height: 20px;
    padding: 0 4px 0 7px;
    background: #ccc;
    color: #666;
}

.scrollbar {
    display: flex;
    flex-direction: column;
    align-items: center;
    width: 15px;
    padding: 5px 0 4px;
    background: #fcfcfc;
    flex: none;
}

.scrollbar svg {
    width: 10px;
    height: 8px;
    fill: #858585;
}

.thumb {
    width: 9px;
    height: 52%;
    margin: 5px 0 auto;
    background: #8a8a8a;
    border-radius: 5px;
}

.edge-bar {
    display: flex;
    flex-direction: column;
    align-items: center;
    gap: 20px;
    width: 54px;
    padding-top: 11px;
    background: #3b3b3b;
    color: #eee;
    flex: none;
}

.dot {
    display: flex;
    align-items: center;
    justify-content: center;
    width: 20px;
    height: 20px;
    border-radius: 50%;
    font: 600 10px 'Open Sans', sans-serif;
}

.blank { background: #767676; }
.olive { background: #7c7350; }
.purple { background: #98649d; }
.brown { background: #54451f; }
.navy { background: #07394b; }
.teal { background: #267a80; }
.moss { background: #77753f; }
.orange { background: #c2601f; }

.edge-add .icon {
    width: 12px;
    height: 12px;
}

.edge-add {
    height: 26px;
}

.edge-bottom {
    display: flex;
    flex-direction: column;
    align-items: center;
    gap: 22px;
    margin-top: auto;
    padding: 14px 6px 13px;
    border-top: 1px solid #5c5c5c;
}

/* taskbar */
.taskbar {
    display: grid;
    grid-template-columns: 1fr auto 1fr;
    align-items: center;
    height: 48px;
    background: linear-gradient(90deg, #221e31, #251c38 20%, #351b3b 32%, #36221f 47%, #4a1717 60%, #4d1712 70%, #3f1b10 80%, #2c1413);
    color: #fff;
    font-family: 'Open Sans', 'Noto Sans', sans-serif;
    flex: none;
}

.weather {
    width: 26px;
    margin-left: 16px;
}

.task-apps {
    display: flex;
}

.task-apps button {
    position: relative;
    display: flex;
    align-items: center;
    justify-content: center;
    width: 44px;
    height: 40px;
}

.task-apps .task-search {
    gap: 5px;
    width: 98px;
    height: 32px;
    margin: 4px;
    background: rgba(255, 255, 255, 0.08);
    border-radius: 16px;
    font-size: 12px;
}

.task-apps .current {
    background: rgba(255, 255, 255, 0.09);
    border-radius: 4px;
}

.running::after,
.current::after {
    content: '';
    position: absolute;
    bottom: 0;
    width: 6px;
    height: 3px;
    background: #bba0a0;
    border-radius: 2px;
}

.current::after {
    width: 16px;
    background: #dfa9dc;
}

.tray {
    display: flex;
    align-items: center;
    justify-content: flex-end;
    gap: 8px;
    padding-right: 19px;
}

.clock {
    margin-left: 8px;
    text-align: right;
    font-size: 11px;
    line-height: 15px;
}

.badge {
    display: flex;
    align-items: center;
    justify-content: center;
    width: 16px;
    height: 16px;
    background: #cf9bdc;
    border-radius: 50%;
    font-size: 10px;
    color: #222;
}
```
